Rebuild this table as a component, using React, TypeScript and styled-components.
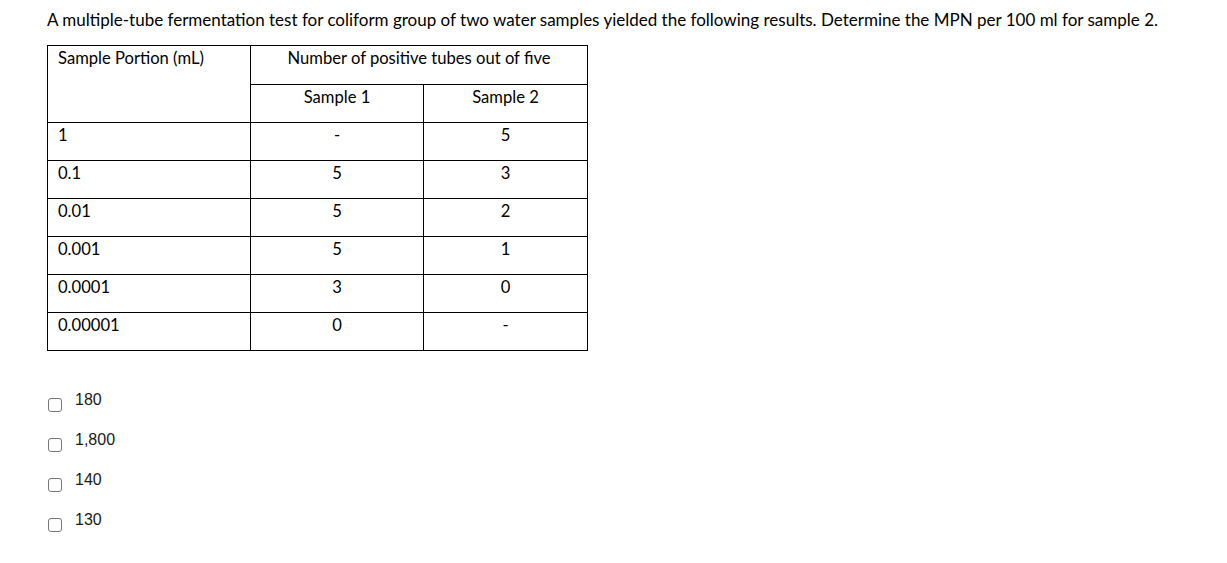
import React from 'react'
import styled, { createGlobalStyle } from 'styled-components'

const GlobalStyle = createGlobalStyle`
  body {
    margin: 0;
    background: #ffffff;
  }
`

const Page = styled.div`
  padding: 10px 0 20px 47px;
  color: #000000;
`

const Question = styled.p`
  margin: 0 0 15px 0;
  font-family: 'Lato', 'Open Sans', sans-serif;
  font-size: 17px;
  line-height: 20px;
  white-space: nowrap;
`

const Table = styled.table`
  border-collapse: collapse;
  table-layout: fixed;
  width: 540px;
  font-family: 'Lato', 'Open Sans', sans-serif;
  font-size: 16.6px;
  color: #000000;
`

const Cell = styled.td<{ $align?: 'left' | 'center' }>`
  border: 1px solid #000000;
  height: 38px;
  padding: 3px 10px 0 10px;
  vertical-align: top;
  text-align: ${({ $align }) => $align ?? 'center'};
  line-height: 18px;
  box-sizing: border-box;
`

const Options = styled.ul`
  list-style: none;
  margin: 40px 0 0 0;
  padding: 0;
  display: flex;
  flex-direction: column;
  gap: 18px;
  font-family: 'Liberation Sans', Arial, sans-serif;
  font-size: 16px;
  color: #1a1a1a;
`

const Option = styled.li`
  display: flex;
  align-items: flex-start;
  gap: 13px;
  height: 22px;
  margin-left: 1px;
`

const Box = styled.span`
  width: 12px;
  height: 12px;
  margin-top: 7px;
  border: 1px solid #757575;
  border-radius: 3px;
  flex: none;
`

const rows: [string, string, string][] = [
  ['1', '-', '5'],
  ['0.1', '5', '3'],
  ['0.01', '5', '2'],
  ['0.001', '5', '1'],
  ['0.0001', '3', '0'],
  ['0.00001', '0', '-'],
]

const answers = ['180', '1,800', '140', '130']

const App: React.FC = () => {
  return (
    <>
      <GlobalStyle />
      <Page>
        <Question>
          A multiple-tube fermentation test for coliform group of two water samples yielded the following results. Determine the MPN per 100 ml for sample 2.
        </Question>
        <Table>
          <colgroup>
            <col style={{ width: 203 }} />
            <col style={{ width: 173 }} />
            <col style={{ width: 164 }} />
          </colgroup>
          <tbody>
            <tr>
              <Cell $align="left" rowSpan={2}>Sample Portion (mL)</Cell>
              <Cell colSpan={2} style={{ height: 39 }}>Number of positive tubes out of five</Cell>
            </tr>
            <tr>
              <Cell>Sample 1</Cell>
              <Cell>Sample 2</Cell>
            </tr>
            {rows.map(([portion, s1, s2]) => (
              <tr key={portion}>
                <Cell $align="left">{portion}</Cell>
                <Cell>{s1}</Cell>
                <Cell>{s2}</Cell>
              </tr>
            ))}
          </tbody>
        </Table>
        <Options>
          {answers.map((a) => (
            <Option key={a}>
              <Box />
              <span>{a}</span>
            </Option>
          ))}
        </Options>
      </Page>
    </>
  )
}

export default App
